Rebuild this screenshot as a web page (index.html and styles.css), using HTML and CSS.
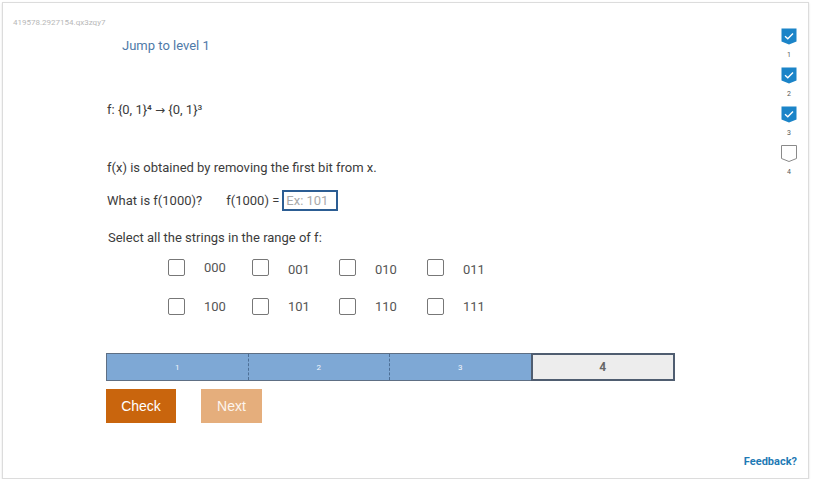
FILE: index.html
```html
<!DOCTYPE html>
<html>
<head>
<meta charset="utf-8">
<link rel="stylesheet" href="styles.css">
</head>
<body>
<div class="page">
  <div class="top">
    <div class="main">
      <div class="uid">419578.2927154.qx3zqy7</div>
      <div class="jump">Jump to level 1</div>
      <div class="func">f: {0, 1}⁴ <span class="arrow">→</span> {0, 1}³</div>
      <div class="desc">f(x) is obtained by removing the first bit from x.</div>
      <div class="ask">
        <span>What is f(1000)?</span>
        <span class="eq">f(1000) =</span>
        <span class="input">Ex: 101</span>
      </div>
      <div class="select">Select all the strings in the range of f:</div>
      <div class="grid">
        <div class="opt"><span class="box"></span><span>000</span></div>
        <div class="opt low"><span class="box"></span><span>001</span></div>
        <div class="opt low"><span class="box"></span><span>010</span></div>
        <div class="opt low"><span class="box"></span><span>011</span></div>
        <div class="opt"><span class="box"></span><span>100</span></div>
        <div class="opt"><span class="box"></span><span>101</span></div>
        <div class="opt"><span class="box"></span><span>110</span></div>
        <div class="opt"><span class="box"></span><span>111</span></div>
      </div>
      <div class="progress">
        <div class="seg done">1</div>
        <div class="seg done">2</div>
        <div class="seg done">3</div>
        <div class="seg current">4</div>
      </div>
      <div class="buttons">
        <div class="btn check">Check</div>
        <div class="btn next">Next</div>
      </div>
    </div>
    <div class="levels">
      <div class="lvl">
        <svg width="16" height="17" viewBox="0 0 16 17"><path d="M0.5 0.5H15.5V13.5L8 16.5L0.5 13.5Z" fill="#1b84c8"/><path d="M4 8.2L6.8 10.8L12 5.5" fill="none" stroke="#fff" stroke-width="1.4"/></svg>
        <span>1</span>
      </div>
      <div class="lvl">
        <svg width="16" height="17" viewBox="0 0 16 17"><path d="M0.5 0.5H15.5V13.5L8 16.5L0.5 13.5Z" fill="#1b84c8"/><path d="M4 8.2L6.8 10.8L12 5.5" fill="none" stroke="#fff" stroke-width="1.4"/></svg>
        <span>2</span>
      </div>
      <div class="lvl">
        <svg width="16" height="17" viewBox="0 0 16 17"><path d="M0.5 0.5H15.5V13.5L8 16.5L0.5 13.5Z" fill="#1b84c8"/><path d="M4 8.2L6.8 10.8L12 5.5" fill="none" stroke="#fff" stroke-width="1.4"/></svg>
        <span>3</span>
      </div>
      <div class="lvl">
        <svg width="16" height="17" viewBox="0 0 16 17"><path d="M0.5 0.5H15.5V13.5L8 16.5L0.5 13.5Z" fill="#fff" stroke="#8a8a8a"/></svg>
        <span>4</span>
      </div>
    </div>
  </div>
  <div class="footer"><span class="feedback">Feedback?</span></div>
</div>
</body>
</html>
```
FILE: styles.css
```css
html, body {
  margin: 0;
  padding: 0;
  background: #fff;
}
body {
  font-family: Roboto, "Liberation Sans", sans-serif;
  color: #3c3c3c;
}
.page {
  margin: 2px 4px 0 2px;
  height: 477px;
  box-sizing: border-box;
  border: 1px solid #dcdcdc;
  box-shadow: 0 1px 2px rgba(0,0,0,0.12);
  display: flex;
  flex-direction: column;
}
.top {
  display: flex;
  flex: 1;
}
.main {
  flex: 1;
  padding: 15px 0 0 103px;
}
.uid {
  margin-left: -93px;
  font-size: 8px;
  line-height: 10px;
  color: #b8b8b8;
}
.jump {
  margin: 10px 0 0 16px;
  font-size: 13px;
  line-height: 16px;
  color: #4f7aa8;
}
.func {
  margin: 48px 0 0 1px;
  font-size: 13px;
  line-height: 16px;
}
.arrow {
  font-family: "DejaVu Sans", sans-serif;
  font-size: 12px;
}
.desc {
  margin: 42px 0 0 1px;
  font-size: 13px;
  line-height: 16px;
}
.ask {
  margin: 14px 0 0 1px;
  display: flex;
  align-items: center;
  font-size: 13px;
  line-height: 16px;
  height: 21px;
}
.eq {
  margin-left: 24px;
}
.input {
  margin-left: 3px;
  width: 50px;
  height: 17px;
  border: 2px solid #2c5d93;
  color: #aaa;
  font-size: 13px;
  line-height: 17px;
  padding-left: 2px;
}
.select {
  margin: 19px 0 0 2px;
  font-size: 13px;
  line-height: 16px;
}
.grid {
  margin: 13px 0 0 62px;
  display: grid;
  grid-template-columns: 84px 87px 88px 60px;
  row-gap: 22px;
}
.opt {
  display: flex;
  align-items: center;
  gap: 19px;
  font-size: 13px;
  color: #555;
  height: 17px;
}
.opt.low span:last-child {
  position: relative;
  top: 2px;
}
.box {
  width: 15px;
  height: 15px;
  border: 1px solid #777;
  border-radius: 2px;
  background: #fff;
}
.progress {
  margin: 38px 0 0 0;
  width: 569px;
  height: 28px;
  box-sizing: border-box;
  display: flex;
  border: 1px solid #5e6f84;
  background: #7ea8d5;
}
.seg {
  flex: 1;
  display: flex;
  align-items: center;
  justify-content: center;
  font-size: 8px;
  color: #f2f6fb;
  border-left: 1px dashed #4d6f96;
}
.seg:first-child {
  border-left: none;
}
.seg.current {
  background: #ededed;
  border: 2px solid #4f5d70;
  margin: -1px -1px -1px 0;
  color: #666;
  font-weight: bold;
  font-size: 12px;
}
.buttons {
  margin-top: 8px;
  display: flex;
  gap: 25px;
}
.btn {
  height: 34px;
  display: flex;
  align-items: center;
  justify-content: center;
  color: #fff;
  font-size: 14px;
  font-family: "Liberation Sans", Arial, sans-serif;
}
.check {
  width: 70px;
  background: #c9650d;
}
.next {
  width: 61px;
  background: #e5ae7c;
  color: #fdf5ee;
}
.levels {
  width: 16px;
  padding: 25px 11px 0 0;
  display: flex;
  flex-direction: column;
  gap: 5px;
}
.lvl {
  display: flex;
  flex-direction: column;
  align-items: center;
  height: 34px;
}
.lvl svg {
  display: block;
}
.lvl span {
  margin-top: 6px;
  font-size: 7px;
  line-height: 8px;
  color: #555;
}
.footer {
  display: flex;
  justify-content: flex-end;
  padding: 0 11px 9px 0;
}
.feedback {
  font-size: 11px;
  font-weight: bold;
  color: #1f7ab5;
  line-height: 14px;
}
```
